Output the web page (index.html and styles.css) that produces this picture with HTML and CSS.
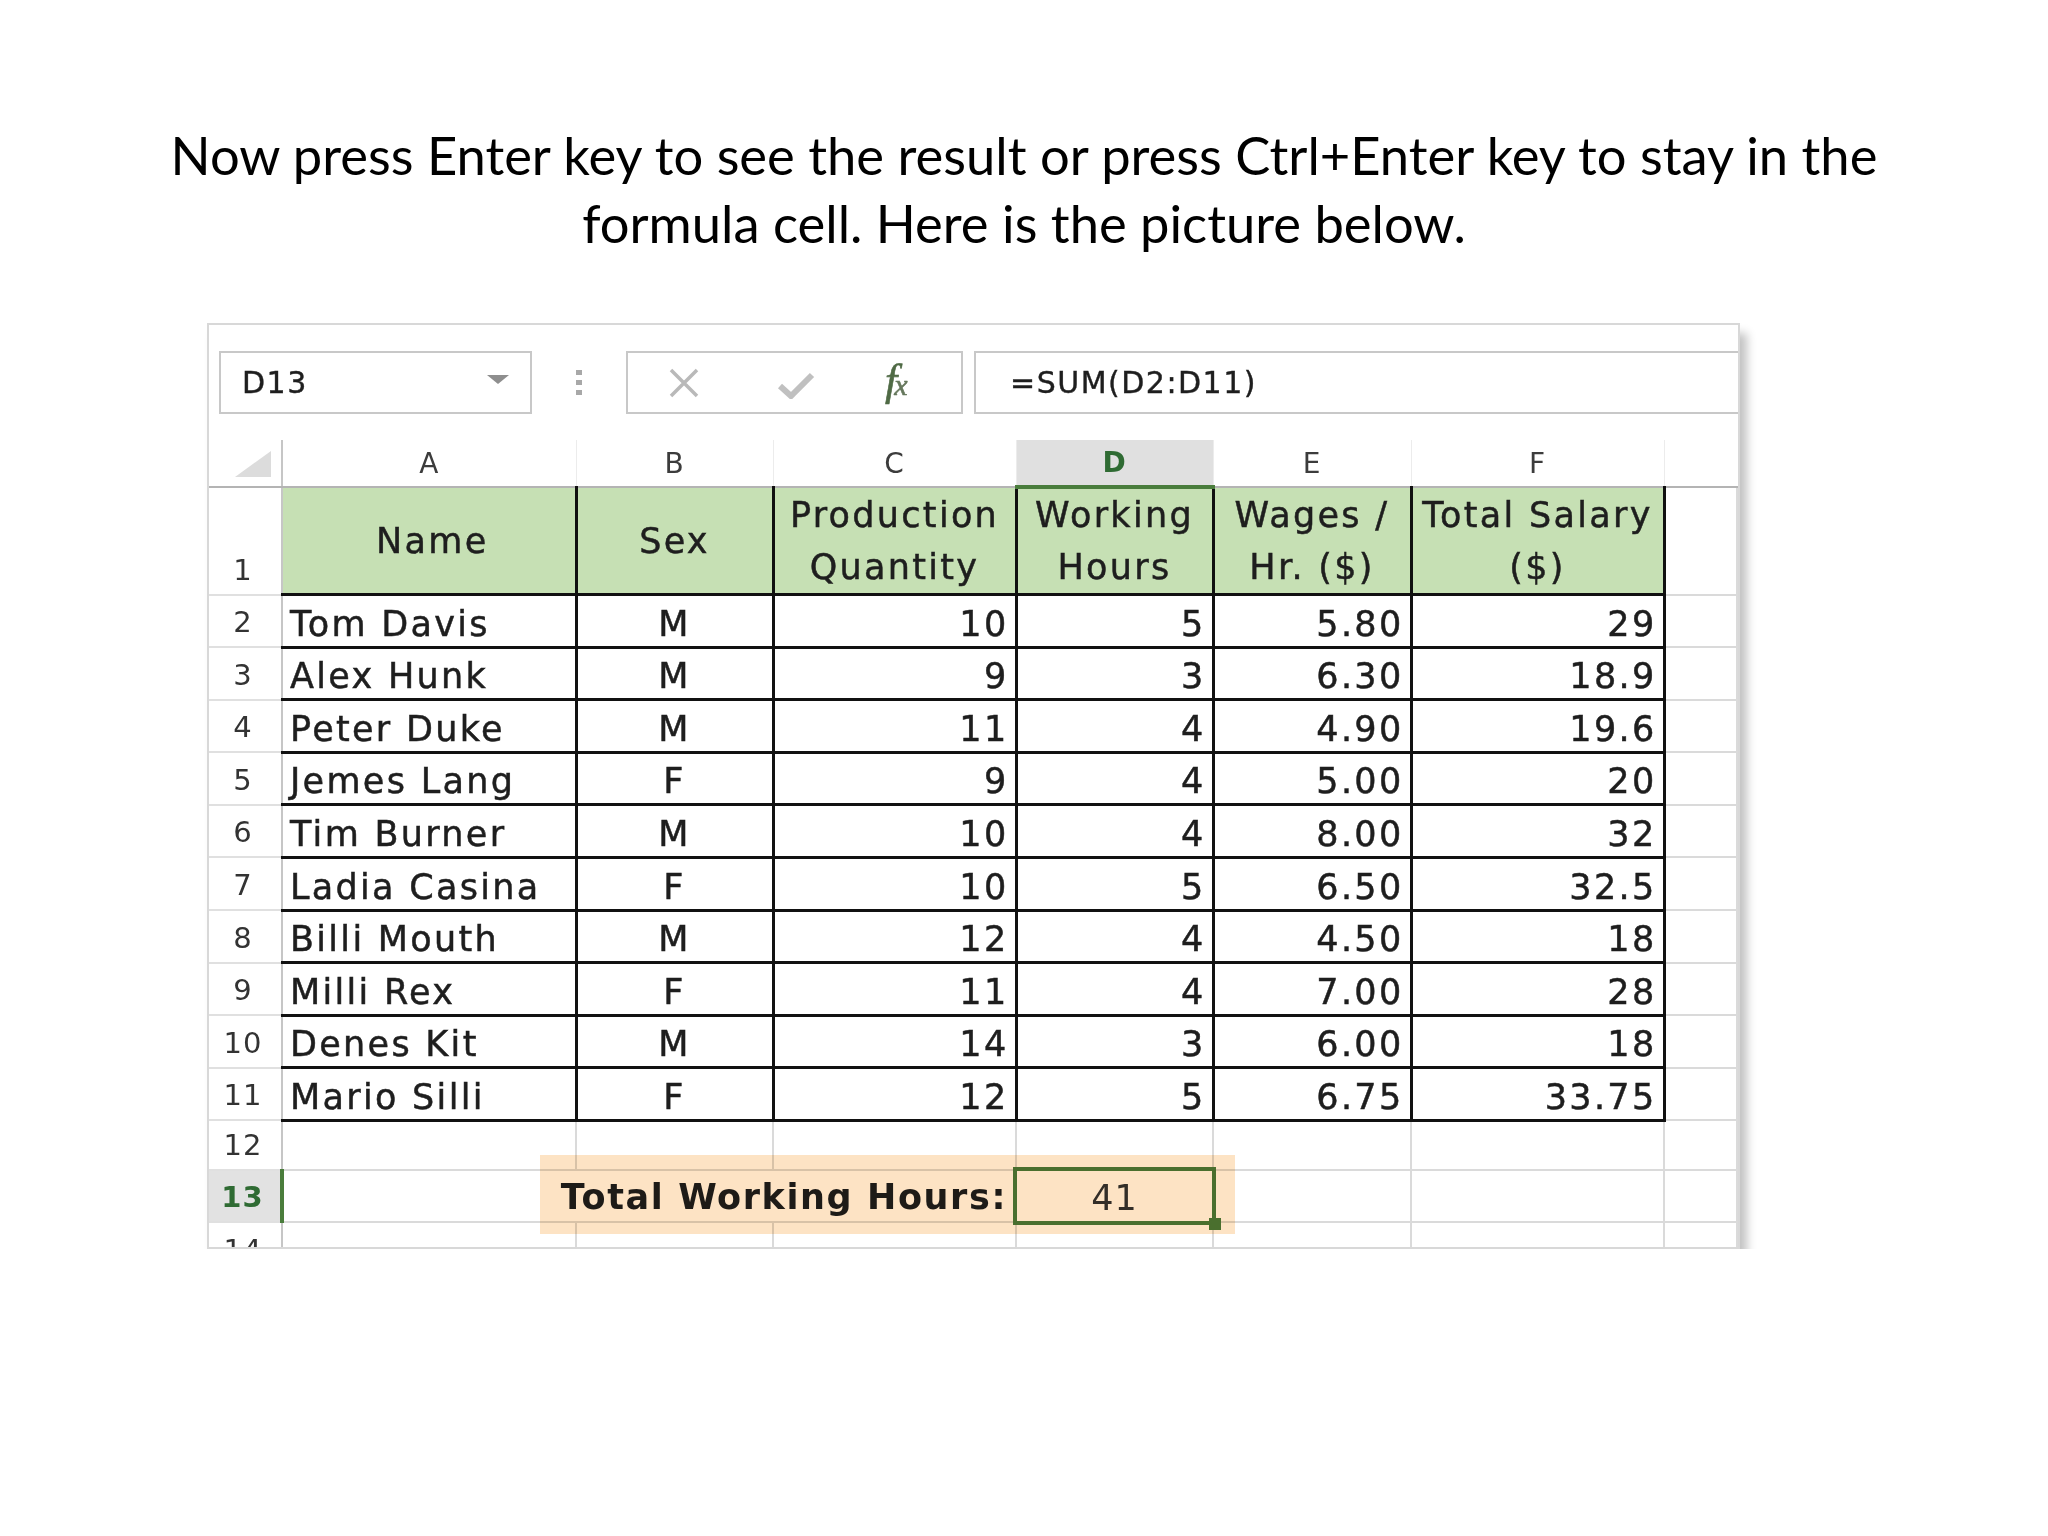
FILE: index.html
```html
<!DOCTYPE html>
<html lang="en">
<head>
  <meta charset="UTF-8" />
  <title>Total Working Hours</title>
  <link rel="stylesheet" href="styles.css">
</head>
<body>
  <h1 class="caption">Now press Enter key to see the result or press Ctrl+Enter key to stay in the<br>formula cell. Here is the picture below.</h1>

  <div class="sheet">
    <div class="fbar">
      <div class="namebox"><span>D13</span><span class="caret"></span></div>
      <div class="dots"><span></span><span></span><span></span></div>
      <div class="btns">
        <svg class="ic-x" width="32" height="30" viewBox="0 0 32 30"><path d="M3 2 L29 28 M29 2 L3 28" stroke="#b9b9b9" stroke-width="3.5" fill="none"/></svg>
        <svg class="ic-ok" width="38" height="28" viewBox="0 0 38 28"><path d="M3 15 L14 25 L35 4" stroke="#c0c0c0" stroke-width="6" fill="none"/></svg>
        <span class="fx">f<i>x</i></span>
      </div>
      <div class="formula">=SUM(D2:D11)</div>
    </div>

    <table class="grid">
      <colgroup>
        <col class="c-rh"><col class="c-a"><col class="c-b"><col class="c-c"><col class="c-d"><col class="c-e"><col class="c-f"><col>
      </colgroup>
      <tr class="colhdr">
        <th class="corner"><span class="tri"></span></th>
        <th>A</th><th>B</th><th>C</th><th class="on">D</th><th>E</th><th>F</th><th class="last"></th>
      </tr>
      <tr class="r-head">
        <th class="rh">1</th>
        <td class="t h first">Name</td>
        <td class="t h">Sex</td>
        <td class="t h">Production<br>Quantity</td>
        <td class="t h">Working<br>Hours</td>
        <td class="t h">Wages /<br>Hr. ($)</td>
        <td class="t h">Total Salary<br>($)</td>
        <td></td>
      </tr>
      <tr class="r"><th class="rh">2</th><td class="t first">Tom Davis</td><td class="t ctr">M</td><td class="t num">10</td><td class="t num">5</td><td class="t num">5.80</td><td class="t num">29</td><td></td></tr>
      <tr class="r"><th class="rh">3</th><td class="t first">Alex Hunk</td><td class="t ctr">M</td><td class="t num">9</td><td class="t num">3</td><td class="t num">6.30</td><td class="t num">18.9</td><td></td></tr>
      <tr class="r"><th class="rh">4</th><td class="t first">Peter Duke</td><td class="t ctr">M</td><td class="t num">11</td><td class="t num">4</td><td class="t num">4.90</td><td class="t num">19.6</td><td></td></tr>
      <tr class="r"><th class="rh">5</th><td class="t first">Jemes Lang</td><td class="t ctr">F</td><td class="t num">9</td><td class="t num">4</td><td class="t num">5.00</td><td class="t num">20</td><td></td></tr>
      <tr class="r"><th class="rh">6</th><td class="t first">Tim Burner</td><td class="t ctr">M</td><td class="t num">10</td><td class="t num">4</td><td class="t num">8.00</td><td class="t num">32</td><td></td></tr>
      <tr class="r"><th class="rh">7</th><td class="t first">Ladia Casina</td><td class="t ctr">F</td><td class="t num">10</td><td class="t num">5</td><td class="t num">6.50</td><td class="t num">32.5</td><td></td></tr>
      <tr class="r"><th class="rh">8</th><td class="t first">Billi Mouth</td><td class="t ctr">M</td><td class="t num">12</td><td class="t num">4</td><td class="t num">4.50</td><td class="t num">18</td><td></td></tr>
      <tr class="r"><th class="rh">9</th><td class="t first">Milli Rex</td><td class="t ctr">F</td><td class="t num">11</td><td class="t num">4</td><td class="t num">7.00</td><td class="t num">28</td><td></td></tr>
      <tr class="r"><th class="rh">10</th><td class="t first">Denes Kit</td><td class="t ctr">M</td><td class="t num">14</td><td class="t num">3</td><td class="t num">6.00</td><td class="t num">18</td><td></td></tr>
      <tr class="r"><th class="rh">11</th><td class="t first">Mario Silli</td><td class="t ctr">F</td><td class="t num">12</td><td class="t num">5</td><td class="t num">6.75</td><td class="t num">33.75</td><td></td></tr>
      <tr class="r12"><th class="rh">12</th><td></td><td></td><td></td><td></td><td></td><td></td><td></td></tr>
      <tr class="r13">
        <th class="rh on">13</th>
        <td class="total" colspan="3">Total Working Hours:</td>
        <td class="active">41<span class="selbox"><span class="handle"></span></span></td>
        <td></td><td></td><td></td>
      </tr>
      <tr class="r"><th class="rh">14</th><td></td><td></td><td></td><td></td><td></td><td></td><td></td></tr>
    </table>

    <div class="mark"></div>
  </div>
</body>
</html>
```

FILE: styles.css
```css
body {
  margin: 0;
  background: #fff;
  color: #000;
}

.caption {
  margin: 121px 0 0;
  font-family: Lato, "Liberation Sans", sans-serif;
  font-size: 52.5px;
  font-weight: normal;
  line-height: 68px;
  text-align: center;
}

.sheet {
  position: relative;
  margin: 66px 0 0 207px;
  width: 1529px;
  height: 922px;
  border: 2px solid #d8d8d8;
  box-shadow: 7px 10px 9px rgba(0,0,0,0.24);
  overflow: hidden;
  background: #fff;
  font-family: "DejaVu Sans", "Liberation Sans", sans-serif;
  color: #1e1e1e;
}

/* formula bar */
.fbar {
  display: flex;
  align-items: center;
  padding: 26px 0 26px 10px;
}
.namebox {
  box-sizing: border-box;
  width: 313px;
  height: 63px;
  border: 2px solid #c8c8c8;
  display: flex;
  align-items: center;
  justify-content: space-between;
  padding: 0 21px 0 21px;
  font-size: 30px;
  letter-spacing: 1.5px;
  -webkit-text-stroke: 0.4px currentColor;
}
.caret {
  width: 0; height: 0;
  border-left: 11px solid transparent;
  border-right: 11px solid transparent;
  border-top: 9px solid #8e8e8e;
  margin-top: -6px;
}
.dots {
  display: flex;
  flex-direction: column;
  gap: 5px;
  margin: 0 44px;
}
.dots span {
  width: 6px;
  height: 5px;
  background: #a8a8a8;
}
.btns {
  box-sizing: border-box;
  width: 337px;
  height: 63px;
  border: 2px solid #c8c8c8;
  display: flex;
  align-items: center;
  padding-left: 40px;
}
.ic-x { margin-right: 77px; }
.ic-ok { margin-right: 70px; margin-top: 4px; }
.fx {
  font-family: "Liberation Serif", serif;
  font-style: italic;
  font-size: 44px;
  line-height: 44px;
  color: #4f6a45;
  letter-spacing: -3px;
  -webkit-text-stroke: 0.6px currentColor;
}
.fx i {
  font-size: 30px;
  color: #66785d;
}
.formula {
  box-sizing: border-box;
  flex: 1;
  height: 63px;
  margin-left: 11px;
  border: 2px solid #c8c8c8;
  border-right: none;
  display: flex;
  align-items: center;
  padding-left: 34px;
  font-size: 30px;
  letter-spacing: 1.5px;
  -webkit-text-stroke: 0.4px currentColor;
}

/* grid */
.grid {
  border-collapse: collapse;
  table-layout: fixed;
  width: 1529px;
}
.c-rh { width: 73px; }
.c-a { width: 294px; }
.c-b { width: 197px; }
.c-c { width: 243px; }
.c-d { width: 197px; }
.c-e { width: 198px; }
.c-f { width: 253px; }

.grid td, .grid th {
  padding: 0;
  border: 2px solid #dadada;
  font-size: 35px;
  letter-spacing: 2.3px;
  line-height: 40px;
  white-space: nowrap;
  overflow: visible;
}
.grid td { -webkit-text-stroke: 0.5px currentColor; }

.colhdr { height: 47px; }
.colhdr th {
  border-top: none;
  border-left: 1px solid #ececec;
  border-right: 1px solid #ececec;
  border-bottom: 2px solid #b4b4b4;
  font-size: 28px;
  letter-spacing: 1px;
  font-weight: normal;
  color: #3c3c3c;
  line-height: 45px;
  vertical-align: middle;
}
.colhdr th.on {
  background: #e0e0e0;
  color: #2f6b33;
  font-weight: bold;
  border-bottom: 4px solid #4a7d3c;
}
.colhdr th.corner {
  border-left: none;
  border-right: 2px solid #c6c6c6;
  vertical-align: bottom;
  padding: 0 10px 9px 0;
}
.colhdr th.last { border-right: none; }
.tri {
  display: block;
  width: 0; height: 0;
  margin-left: auto;
  border-left: 36px solid transparent;
  border-bottom: 26px solid #dcdcdc;
}

.grid th.rh {
  border-left: none;
  border-right: 2px solid #c6c6c6;
  border-bottom: 2px solid #e0e0e0;
  font-size: 29px;
  letter-spacing: 1px;
  font-weight: normal;
  color: #333;
  text-align: center;
  vertical-align: bottom;
  padding: 0 4px 4px 0;
}
.grid th.rh.on {
  background: #e2e2e2;
  color: #2f6b33;
  font-weight: bold;
  border-right: 4px solid #4a7d3c;
}

.r-head { height: 104px; }
.r { height: 52.6px; }
.r12 { height: 50px; }
.r13 { height: 52px; }

.grid td { vertical-align: bottom; padding-bottom: 2px; }

.grid td.t {
  border: 3px solid #111;
}
.grid td.t.first { border-left: none; }
.grid td.h {
  border-top: none;
  background: #c6e0b4;
  text-align: center;
  vertical-align: middle;
  line-height: 52px;
  padding: 0;
}
.grid td.first { padding-left: 7px; }
.grid td.ctr { text-align: center; }
.grid td.num { text-align: right; padding-right: 6px; }

.r13 td.total {
  text-align: right;
  padding-right: 8px;
  font-weight: bold;
  letter-spacing: 1.6px;
  padding-bottom: 4px;
  -webkit-text-stroke: 0;
}
.r13 td.active {
  position: relative;
  text-align: center;
  color: #333;
  letter-spacing: 1px;
  padding-bottom: 3px;
  -webkit-text-stroke: 0;
}
.selbox {
  position: absolute;
  left: -4px; top: -4px; right: -4px; bottom: -4px;
  border: 4px solid #4a7d3c;
}
.handle {
  position: absolute;
  right: -9px;
  bottom: -9px;
  width: 12px;
  height: 12px;
  background: #4a7d3c;
}

/* orange highlight drawn over the sheet */
.mark {
  position: absolute;
  left: 331px;
  top: 830px;
  width: 695px;
  height: 79px;
  background: #fde3c4;
  mix-blend-mode: multiply;
  pointer-events: none;
}
```
